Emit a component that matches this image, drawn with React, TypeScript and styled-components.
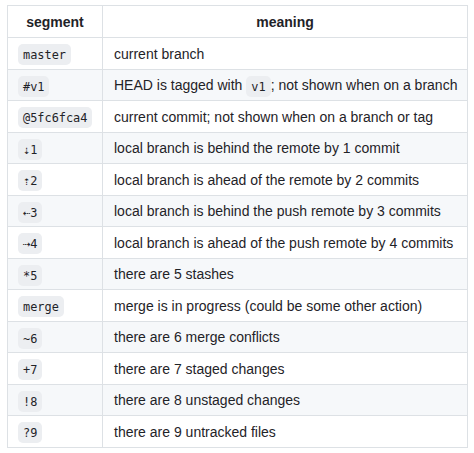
import React from "react";
import styled, { createGlobalStyle } from "styled-components";

const Global = createGlobalStyle`
  html, body { margin: 0; padding: 0; background: #ffffff; }
  body { font-family: "Liberation Sans", Arial, sans-serif; color: #1f2328; }
`;

const Page = styled.div`
  padding: 5px 7px 0 7px;
`;

const Table = styled.table`
  border-collapse: collapse;
  width: 460px;
  table-layout: fixed;
  font-size: 14px;
`;

const Col = styled.col<{ $w: number }>`
  width: ${(p) => p.$w}px;
`;

const HeadRow = styled.tr`
  height: 32.3px;
  background: #ffffff;
`;

const Row = styled.tr<{ $alt: boolean }>`
  height: 31.5px;
  background: ${(p) => (p.$alt ? "#f6f8fa" : "#ffffff")};
`;

const Th = styled.th`
  border: 1px solid #dde1e5;
  padding: 0 12px;
  font-weight: 700;
  text-align: center;
  vertical-align: middle;
`;

const Td = styled.td`
  border: 1px solid #dde1e5;
  padding: 0 10px 0 11px;
  vertical-align: middle;
  white-space: nowrap;
`;

const CodeCell = styled(Td)`
  padding: 0 4px 0 10px;
`;

const Code = styled.code`
  font-family: "DejaVu Sans Mono", "Liberation Mono", monospace;
  font-size: 11.9px;
  background: #eceef1;
  border-radius: 5px;
  padding: 3.5px 5px;
`;

type Item = { seg: string; meaning: React.ReactNode };

const rows: Item[] = [
  { seg: "master", meaning: "current branch" },
  {
    seg: "#v1",
    meaning: (
      <>
        HEAD is tagged with <Code>v1</Code>; not shown when on a branch
      </>
    ),
  },
  { seg: "@5fc6fca4", meaning: "current commit; not shown when on a branch or tag" },
  { seg: "⇣1", meaning: "local branch is behind the remote by 1 commit" },
  { seg: "⇡2", meaning: "local branch is ahead of the remote by 2 commits" },
  { seg: "⇠3", meaning: "local branch is behind the push remote by 3 commits" },
  { seg: "⇢4", meaning: "local branch is ahead of the push remote by 4 commits" },
  { seg: "*5", meaning: "there are 5 stashes" },
  { seg: "merge", meaning: "merge is in progress (could be some other action)" },
  { seg: "~6", meaning: "there are 6 merge conflicts" },
  { seg: "+7", meaning: "there are 7 staged changes" },
  { seg: "!8", meaning: "there are 8 unstaged changes" },
  { seg: "?9", meaning: "there are 9 untracked files" },
];

export default function App() {
  return (
    <>
      <Global />
      <Page>
        <Table>
          <colgroup>
            <Col $w={95} />
            <Col $w={365} />
          </colgroup>
          <thead>
            <HeadRow>
              <Th>segment</Th>
              <Th>meaning</Th>
            </HeadRow>
          </thead>
          <tbody>
            {rows.map((r, i) => (
              <Row key={r.seg} $alt={i % 2 === 1}>
                <CodeCell>
                  <Code>{r.seg}</Code>
                </CodeCell>
                <Td>{r.meaning}</Td>
              </Row>
            ))}
          </tbody>
        </Table>
      </Page>
    </>
  );
}
